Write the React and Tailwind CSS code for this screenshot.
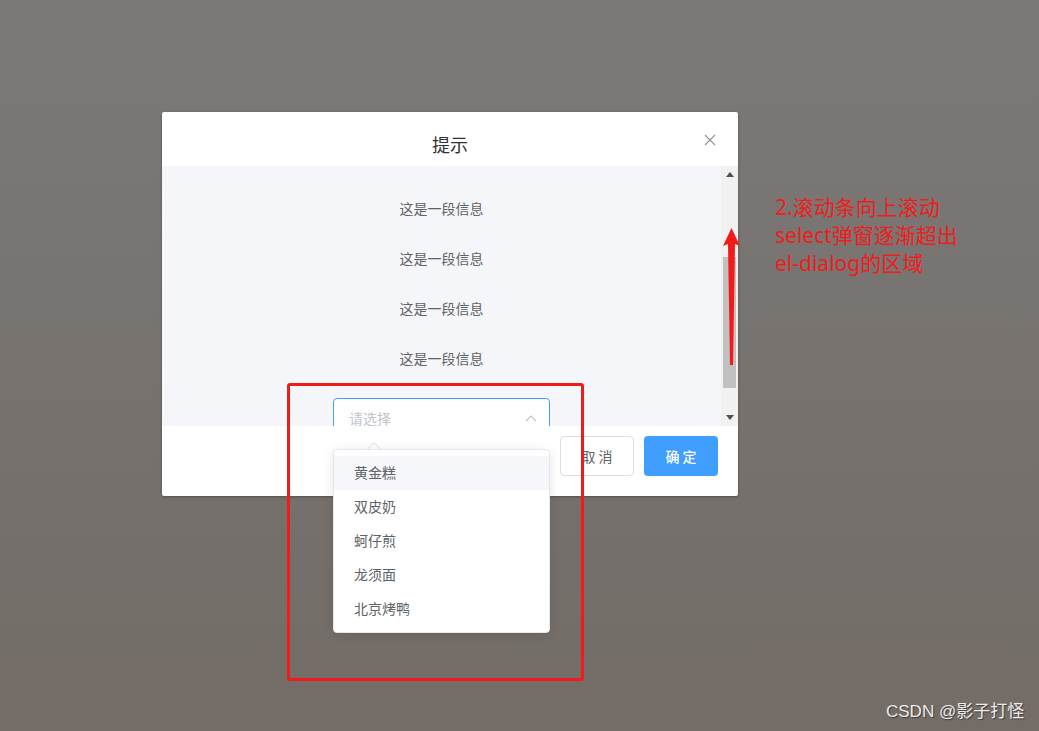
import React from 'react';

const messages = ['这是一段信息', '这是一段信息', '这是一段信息', '这是一段信息'];
const options = ['黄金糕', '双皮奶', '蚵仔煎', '龙须面', '北京烤鸭'];

const cjk = { fontFamily: '"Noto Sans CJK SC", "Noto Sans", sans-serif' };

const Scrollbar = () => (
  <div className="w-[17px] h-full shrink-0 bg-[#f1f1f1] flex flex-col items-center">
    <div className="h-[17px] w-full flex items-center justify-center">
      <svg width="8" height="5" viewBox="0 0 8 5">
        <polygon points="4,0 8,5 0,5" fill="#505050" />
      </svg>
    </div>
    <div className="flex-1 w-full flex flex-col px-[2px]">
      <div className="h-[74px]" />
      <div className="h-[131px] bg-[#c1c1c1]" />
    </div>
    <div className="h-[17px] w-full flex items-center justify-center">
      <svg width="8" height="5" viewBox="0 0 8 5">
        <polygon points="0,0 8,0 4,5" fill="#505050" />
      </svg>
    </div>
  </div>
);

const Dialog = () => (
  <div className="w-[576px] bg-white rounded-[2px] shadow-[0_1px_3px_rgba(0,0,0,0.3)]" style={cjk}>
    <header className="relative h-[54px] px-5 pt-5 pb-[10px] flex justify-center">
      <span className="text-[18px] leading-6 text-[#303133]">提示</span>
      <button className="absolute top-5 right-5 w-4 h-4 flex items-center justify-center">
        <svg width="12" height="12" viewBox="0 0 12 12" stroke="#909399" strokeWidth="1.1">
          <line x1="1" y1="1" x2="11" y2="11" />
          <line x1="11" y1="1" x2="1" y2="11" />
        </svg>
      </button>
    </header>

    <div className="h-[260px] bg-[#f5f6fa] flex overflow-hidden">
      <div className="flex-1 flex flex-col items-center pt-[17px]">
        {messages.map((m, i) => (
          <div key={i} className="h-[50px] shrink-0 flex items-center text-[14px] text-[#606266]">
            {m}
          </div>
        ))}
        <div className="mt-[15px] w-[217px] h-[40px] shrink-0 bg-white border border-[#409eff] rounded-[4px] flex items-center justify-between pl-[15px] pr-[12px]">
          <span className="text-[14px] text-[#c0c4cc]">请选择</span>
          <svg width="12" height="8" viewBox="0 0 12 8" fill="none" stroke="#c0c4cc" strokeWidth="1.2">
            <polyline points="1,7 6,2 11,7" />
          </svg>
        </div>
      </div>
      <Scrollbar />
    </div>

    <footer className="h-[70px] px-5 pt-[10px] pb-5 flex justify-end gap-[10px]">
      <button className="w-[74px] h-10 border border-[#dcdfe6] rounded-[4px] bg-white text-[14px] text-[#606266]">
        取 消
      </button>
      <button className="w-[74px] h-10 rounded-[4px] bg-[#409eff] text-[14px] font-medium text-white">
        确 定
      </button>
    </footer>
  </div>
);

const Dropdown = () => (
  <div className="absolute left-[333px] top-[449px] w-[217px]" style={cjk}>
    <div className="absolute -top-[5px] left-[36px] w-[10px] h-[10px] bg-white border-l border-t border-[#e4e7ed] rotate-45" />
    <div className="relative bg-white border border-[#e4e7ed] rounded-[4px] shadow-[0_2px_12px_rgba(0,0,0,0.1)] py-[6px]">
      {options.map((o, i) => (
        <div
          key={o}
          className={`h-[34px] flex items-center px-5 pb-[2px] text-[14px] text-[#606266] ${i === 0 ? 'bg-[#f5f7fa]' : ''}`}
        >
          {o}
        </div>
      ))}
    </div>
  </div>
);

export default function App() {
  return (
    <div className="relative w-full h-[731px] overflow-hidden bg-linear-to-b from-[#7b7977] to-[#736c67] pt-[112px] pl-[162px]">
      <Dialog />
      <Dropdown />

      {/* annotation box */}
      <div className="absolute left-[287px] top-[383px] w-[297px] h-[298px] border-[3px] border-[#f41a1a] rounded-[3px]" />

      {/* annotation arrow */}
      <svg className="absolute left-[720px] top-[226px]" width="24" height="142" viewBox="0 0 24 142">
        <polygon points="11.5,2 20,20 15,18 13,139 10,139 8,18 3,20" fill="#f41a1a" />
      </svg>

      <div
        className="absolute left-[775px] top-[193px] text-[21px] leading-[28px] text-[#f21b1b]"
        style={{ fontFamily: '"Noto Sans", "Noto Sans CJK SC", sans-serif' }}
      >
        <div>2.滚动条向上滚动</div>
        <div>select弹窗逐渐超出</div>
        <div>el-dialog的区域</div>
      </div>

      <div
        className="absolute left-[886px] top-[700px] text-[17px] leading-6 text-[#ececec] [text-shadow:1px_1px_1px_rgba(0,0,0,0.45)]"
        style={{ fontFamily: '"Liberation Sans", "Noto Sans CJK SC", sans-serif' }}
      >
        CSDN @影子打怪
      </div>
    </div>
  );
}
